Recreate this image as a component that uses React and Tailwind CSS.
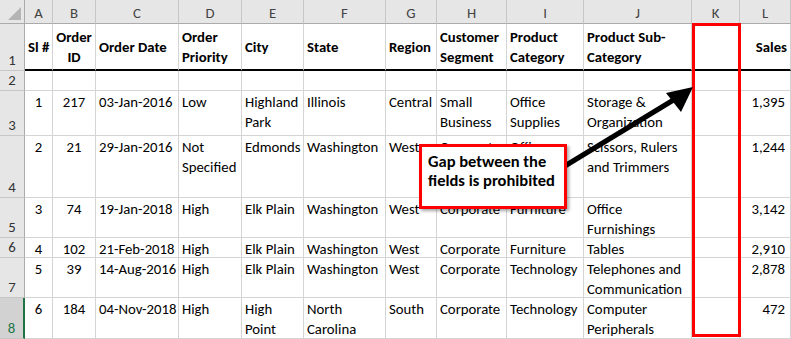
const cols = ['A', 'B', 'C', 'D', 'E', 'F', 'G', 'H', 'I', 'J', 'K', 'L']

// alignment for every column: c = centre, r = right, l = left
const align = ['c', 'c', 'l', 'l', 'l', 'l', 'l', 'l', 'l', 'l', 'l', 'r']

const header = [
  'Sl #', ['Order', 'ID'], 'Order Date', ['Order', 'Priority'], 'City', 'State', 'Region',
  ['Customer', 'Segment'], ['Product', 'Category'], ['Product Sub-', 'Category'], '', 'Sales',
]

const rows = [
  ['1', '217', '03-Jan-2016', 'Low', ['Highland', 'Park'], 'Illinois', 'Central', ['Small', 'Business'], ['Office', 'Supplies'], ['Storage &', 'Organization'], '', '1,395'],
  ['2', '21', '29-Jan-2016', ['Not', 'Specified'], 'Edmonds', 'Washington', 'West', 'Corporate', 'Office', ['Scissors, Rulers', 'and Trimmers'], '', '1,244'],
  ['3', '74', '19-Jan-2018', 'High', 'Elk Plain', 'Washington', 'West', 'Corporate', 'Furniture', ['Office', 'Furnishings'], '', '3,142'],
  ['4', '102', '21-Feb-2018', 'High', 'Elk Plain', 'Washington', 'West', 'Corporate', 'Furniture', 'Tables', '', '2,910'],
  ['5', '39', '14-Aug-2016', 'High', 'Elk Plain', 'Washington', 'West', 'Corporate', 'Technology', ['Telephones and', 'Communication'], '', '2,878'],
  ['6', '184', '04-Nov-2018', 'High', ['High', 'Point'], ['North', 'Carolina'], 'South', 'Corporate', 'Technology', ['Computer', 'Peripherals'], '', '472'],
]

const alignClass = { c: 'text-center', l: 'text-left', r: 'text-right' }

function Lines({ value }) {
  if (Array.isArray(value)) {
    return value.map((v, i) => <div key={i}>{v}</div>)
  }
  return value
}

function RowNum({ n, active }) {
  if (active) {
    return (
      <div className="bg-[#d2d2d2] border-r-2 border-r-[#217346] border-b border-b-[#c6c6c6] flex items-end justify-center pb-[1px] text-[#217346] leading-[18px]">
        {n}
      </div>
    )
  }
  return (
    <div className="bg-[#e6e6e6] border-r border-r-[#ababab] border-b border-b-[#c6c6c6] flex items-end justify-center pb-[1px] text-[#333] leading-[18px]">
      {n}
    </div>
  )
}

export default function App() {
  return (
    <div
      className="relative w-[791px] h-[339px] overflow-hidden bg-white text-black text-[14.75px]"
      style={{ fontFamily: 'Carlito, Lato, "Liberation Sans", sans-serif' }}
    >
      <div className="grid grid-cols-[25px_28px_43px_83px_63px_62px_82px_51px_70px_77px_108px_48px_51px] grid-rows-[24px_47px_20px_45px_62px_40px_20px_40px_41px]">
        {/* select-all corner */}
        <div className="bg-[#e6e6e6] border-r border-r-[#ababab] border-b border-b-[#ababab] flex items-end justify-end pr-[3px] pb-[3px]">
          <div className="w-0 h-0 border-l-[13px] border-l-transparent border-b-[13px] border-b-[#b4b4b4]" />
        </div>
        {cols.map((c) => (
          <div key={c} className="bg-[#e6e6e6] border-r border-r-[#c6c6c6] border-b border-b-[#ababab] flex items-center justify-center pt-[3px] text-[#444]">
            {c}
          </div>
        ))}

        {/* row 1: field names */}
        <RowNum n={1} />
        {header.map((h, i) => (
          <div
            key={i}
            className={`border-r border-r-[#d4d4d4] border-b-2 border-b-black px-[3px] flex flex-col justify-center font-bold leading-[20px] whitespace-nowrap overflow-hidden ${alignClass[align[i]]}`}
          >
            <Lines value={h} />
          </div>
        ))}

        {/* row 2: blank */}
        <RowNum n={2} />
        {cols.map((c) => (
          <div key={c} className="border-r border-b border-[#d4d4d4]" />
        ))}

        {rows.map((r, ri) => (
          <Row key={ri} cells={r} n={ri + 3} active={ri === 5} />
        ))}
      </div>

      {/* highlight round column K */}
      <div className="absolute left-[692px] top-[23px] w-[49px] h-[314px] border-[3px] border-[#ff0000]" />

      {/* arrow */}
      <svg className="absolute left-0 top-0" width="791" height="339" viewBox="0 0 791 339">
        <line x1="555" y1="172" x2="680" y2="96" stroke="#000" strokeWidth="5" />
        <polygon points="693,87 666,93 681,112" fill="#000" />
      </svg>

      {/* callout */}
      <div className="absolute left-[419px] top-[144px] w-[148px] h-[65px] bg-white border-[3px] border-[#ff0000] shadow-[2px_2px_3px_rgba(0,0,0,0.35)] pl-[6px] pt-[5px] font-bold leading-[19px] text-[16.5px] text-black whitespace-nowrap">
        <div>Gap between the</div>
        <div>fields is prohibited</div>
      </div>
    </div>
  )
}

function Row({ cells, n, active }) {
  return (
    <>
      <RowNum n={n} active={active} />
      {cells.map((v, i) => (
        <div
          key={i}
          className={`border-r border-b border-[#d4d4d4] px-[3px] pt-[1px] leading-[20px] whitespace-nowrap overflow-hidden ${alignClass[align[i]]} ${i === 11 ? 'pr-[5px]' : ''}`}
        >
          <Lines value={v} />
        </div>
      ))}
    </>
  )
}
